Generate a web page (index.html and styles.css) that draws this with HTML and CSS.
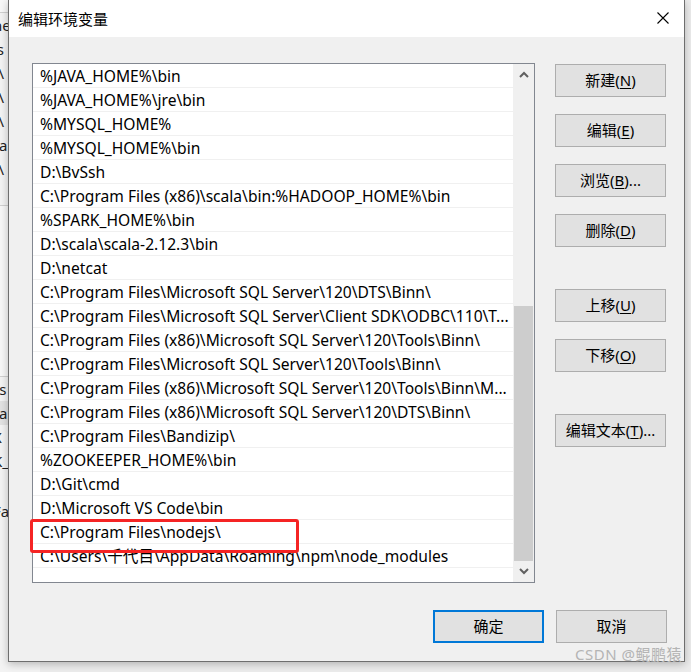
FILE: index.html
```html
<!DOCTYPE html>
<html lang="zh-CN">
<head>
  <meta charset="UTF-8">
  <title>编辑环境变量</title>
  <link rel="stylesheet" href="styles.css">
</head>
<body>

<div class="desktop">
  <!-- window behind the dialog, only its edge shows -->
  <div class="back-window">
    <div class="back-band back-top"></div>
    <div class="back-line">ne</div>
    <div class="back-line">js</div>
    <div class="back-line">\\</div>
    <div class="back-line">\\</div>
    <div class="back-line">\\</div>
    <div class="back-line">ra</div>
    <div class="back-line">\\</div>
    <div class="back-line">、</div>
    <div class="back-gap"></div>
    <div class="back-line">rs</div>
    <div class="back-line back-sel">ra</div>
    <div class="back-line">X</div>
    <div class="back-line">K_</div>
    <div class="back-gap-small"></div>
    <div class="back-line">Fa</div>
  </div>

  <div class="dialog">
    <div class="titlebar">
      <span class="title">编辑环境变量</span>
      <svg class="close" width="12" height="12" viewBox="0 0 12 12">
        <path d="M0.5 0.5 L11.5 11.5 M11.5 0.5 L0.5 11.5" stroke="#000" stroke-width="1.1" fill="none"/>
      </svg>
    </div>

    <div class="body">
      <div class="main">
        <div class="listbox">
          <div class="rows">
            <div class="row">%JAVA_HOME%\bin</div>
            <div class="row">%JAVA_HOME%\jre\bin</div>
            <div class="row">%MYSQL_HOME%</div>
            <div class="row">%MYSQL_HOME%\bin</div>
            <div class="row">D:\BvSsh</div>
            <div class="row">C:\Program Files (x86)\scala\bin:%HADOOP_HOME%\bin</div>
            <div class="row">%SPARK_HOME%\bin</div>
            <div class="row">D:\scala\scala-2.12.3\bin</div>
            <div class="row">D:\netcat</div>
            <div class="row">C:\Program Files\Microsoft SQL Server\120\DTS\Binn\</div>
            <div class="row">C:\Program Files\Microsoft SQL Server\Client SDK\ODBC\110\T...</div>
            <div class="row">C:\Program Files (x86)\Microsoft SQL Server\120\Tools\Binn\</div>
            <div class="row">C:\Program Files\Microsoft SQL Server\120\Tools\Binn\</div>
            <div class="row">C:\Program Files (x86)\Microsoft SQL Server\120\Tools\Binn\M...</div>
            <div class="row">C:\Program Files (x86)\Microsoft SQL Server\120\DTS\Binn\</div>
            <div class="row">C:\Program Files\Bandizip\</div>
            <div class="row">%ZOOKEEPER_HOME%\bin</div>
            <div class="row">D:\Git\cmd</div>
            <div class="row">D:\Microsoft VS Code\bin</div>
            <div class="row">C:\Program Files\nodejs\</div>
            <div class="row">C:\Users\千代目\AppData\Roaming\npm\node_modules</div>
          </div>
          <div class="scrollbar">
            <div class="arrow">
              <svg width="10" height="7" viewBox="0 0 10 7"><path d="M1 6 L5 2 L9 6" stroke="#606060" stroke-width="2" fill="none"/></svg>
            </div>
            <div class="track"><div class="thumb"></div></div>
            <div class="arrow">
              <svg width="10" height="7" viewBox="0 0 10 7"><path d="M1 1 L5 5 L9 1" stroke="#606060" stroke-width="2" fill="none"/></svg>
            </div>
          </div>
        </div>

        <div class="side-buttons">
          <button class="btn">新建(<u>N</u>)</button>
          <button class="btn">编辑(<u>E</u>)</button>
          <button class="btn">浏览(<u>B</u>)...</button>
          <button class="btn">删除(<u>D</u>)</button>
          <button class="btn group">上移(<u>U</u>)</button>
          <button class="btn">下移(<u>O</u>)</button>
          <button class="btn group">编辑文本(<u>T</u>)...</button>
        </div>
      </div>

      <div class="footer">
        <button class="btn default">确定</button>
        <button class="btn">取消</button>
      </div>
    </div>

    <div class="highlight"></div>
  </div>

  <div class="watermark">CSDN @鲲鹏猿</div>
</div>

</body>
</html>
```

FILE: styles.css
```css
body { margin: 0; background: #eeeeee; font-family: "Noto Sans", "Noto Sans CJK SC", sans-serif; }
.desktop { position: relative; width: 691px; height: 672px; overflow: hidden; background: #ececec; }

/* background window edge */
.back-window {
  position: absolute;
  left: 0;
  top: 0;
  width: 40px;
  height: 672px;
  background: #f3f3f3;
  font-size: 15px;
  color: #222;
}
.back-band { height: 12px; background: #f8f8f8; border-bottom: 1px solid #d0d0d0; }
.back-line { height: 24px; line-height: 24px; margin-left: -7px; white-space: nowrap; }
.back-sel { background: #e2e2e2; }
.back-gap { height: 170px; border-top: 1px solid #d0d0d0; border-bottom: 1px solid #d0d0d0; background: #f7f7f7; }
.back-gap-small { height: 26px; }

/* dialog */
.dialog {
  position: absolute;
  left: 8px;
  top: 0;
  width: 675px;
  height: 661px;
  background: #f0f0f0;
  border: 1px solid #6e6e6e;
  border-top: none;
  box-shadow: 0 2px 8px rgba(0, 0, 0, 0.25);
  display: flex;
  flex-direction: column;
}
.titlebar {
  height: 37px;
  background: #fff;
  display: flex;
  align-items: center;
  justify-content: space-between;
  padding: 0 15px 0 9px;
  flex-shrink: 0;
}
.title { font-size: 15px; color: #000; }
.close { display: block; margin-top: -1px; }

.body { padding: 26px 17px 0 23px; }
.main { display: flex; gap: 20px; }

.listbox {
  width: 501px;
  height: 518px;
  background: #fff;
  border: 1px solid #828790;
  display: flex;
}
.rows { flex: 1; overflow: hidden; }
.row {
  height: 21px;
  line-height: 21px;
  padding-top: 2px;
  border-bottom: 1px solid #f0f0f0;
  padding-left: 7px;
  font-size: 15.6px;
  color: #000;
  white-space: nowrap;
  overflow: hidden;
}
.scrollbar {
  width: 21px;
  background: #f0f0f0;
  display: flex;
  flex-direction: column;
}
.arrow { height: 21px; display: flex; align-items: center; justify-content: center; }
.track { flex: 1; display: flex; flex-direction: column; justify-content: flex-end; }
.thumb { height: 255px; margin: 0 1px; background: #cdcdcd; }

.side-buttons { display: flex; flex-direction: column; gap: 17px; padding-top: 1px; }
.btn {
  width: 111px;
  height: 33px;
  background: #e1e1e1;
  border: 1px solid #adadad;
  font-family: "Noto Sans", "Noto Sans CJK SC", sans-serif;
  font-size: 15px;
  color: #000;
  padding: 0 0 3px;
}
.btn u { text-decoration-thickness: 1px; text-underline-offset: 2px; }
.btn.group { margin-top: 25px; }
.btn.default { border: 2px solid #0078d7; width: 111px; }

.footer { display: flex; justify-content: flex-end; gap: 12px; margin-top: 27px; }

.highlight {
  position: absolute;
  left: 21px;
  top: 519px;
  width: 263px;
  height: 28px;
  border: 3px solid #f52424;
  border-radius: 3px;
}

.watermark {
  position: absolute;
  right: 9px;
  bottom: 8px;
  font-size: 15px;
  color: #b4b4b4;
  letter-spacing: 0.5px;
}
```
